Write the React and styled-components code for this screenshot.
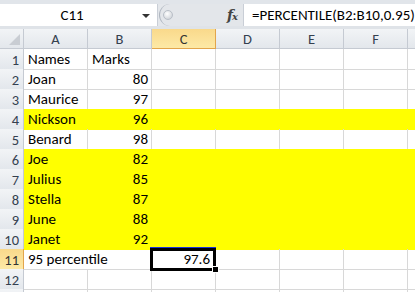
import React from 'react';
import styled, {createGlobalStyle, css} from "styled-components";

const GlobalStyle = createGlobalStyle`
html, body {
margin: 0;
padding: 0;
background: #ffffff;
overflow: hidden;
}
body {
font-family: Carlito, Lato, "Liberation Sans", sans-serif;
}
`;

const Sheet = styled.div`
width: 415px;
height: 292px;
overflow: hidden;
background: #ffffff;
`;

const FormulaBar = styled.div`
display: flex;
height: 22px;
border-top: 4px solid #e1e5ea;
border-bottom: 3px solid #dfe3e8;
background: #e4e7eb;
`;

const NameBox = styled.div`
display: flex;
align-items: center;
width: 158px;
background: #ffffff;
border-right: 1px solid #c9ced6;
box-sizing: border-box;
`;

const NameText = styled.div`
flex: 1;
text-align: center;
font-size: 15px;
color: #000;
padding-left: 2px;
`;

const DropArrow = styled.div`
width: 0;
height: 0;
margin: 2px 7px 0 0;
border-left: 4px solid transparent;
border-right: 4px solid transparent;
border-top: 4px solid #333;
`;

const Grip = styled.div`
display: flex;
align-items: center;
justify-content: space-between;
width: 84px;
margin-left: 1px;
padding: 0 6px 0 3px;
box-sizing: border-box;
background: #e3e6ea;
border-left: 1px solid #aeb5bf;
border-radius: 11px 0 0 11px;
`;

const Bubble = styled.div`
width: 8px;
height: 8px;
border-radius: 50%;
background: radial-gradient(circle at 40% 35%, #ffffff, #c4c9d0);
border: 1px solid #b9bfc7;
`;

const Fx = styled.div`
font-family: "DejaVu Serif", "Liberation Serif", serif;
font-style: italic;
font-weight: bold;
font-size: 14px;
color: #444;
letter-spacing: -1px;

span {
font-size: 10px;
}
`;

const FormulaInput = styled.div`
flex: 1;
display: flex;
align-items: center;
padding-left: 8px;
background: #ffffff;
border-left: 1px solid #c9ced6;
font-size: 15px;
color: #000;
white-space: nowrap;
overflow: hidden;
`;

const Grid = styled.div`
display: flex;
flex-direction: column;
`;

const Row = styled.div`
display: grid;
grid-template-columns: 24px repeat(7, 64px);
height: 20px;
`;

const headerBase = css`
box-sizing: border-box;
display: flex;
align-items: center;
justify-content: center;
font-size: 14.5px;
color: #34404f;
background: linear-gradient(#f2f4f6, #e3e7ec);
border-right: 1px solid #c5cad2;
border-bottom: 1px solid #c5cad2;

${({$active}) => (
    $active && css`
background: linear-gradient(#f9d98b, #fde9a6);
border-right-color: #e2a54c;
border-bottom-color: #e2a54c;
color: #333;
`)}
`;

const ColHeader = styled.div`
${headerBase}
`;

const RowHeader = styled.div`
${headerBase}
justify-content: flex-end;
padding-right: 4px;
padding-top: 2px;
`;

const Corner = styled.div`
box-sizing: border-box;
position: relative;
background: linear-gradient(#f2f4f6, #e3e7ec);
border-right: 1px solid #c5cad2;
border-bottom: 1px solid #c5cad2;

&::after {
content: "";
position: absolute;
right: 3px;
bottom: 3px;
border-left: 11px solid transparent;
border-bottom: 11px solid #c9cdd3;
}
`;

const Cell = styled.div`
box-sizing: border-box;
display: flex;
align-items: flex-end;
padding: 0 3px 1px 4px;
font-size: 15px;
color: #000;
white-space: nowrap;
overflow: visible;
border-right: 1px solid #d8d8d8;
border-bottom: 1px solid #d8d8d8;
justify-content: ${({$right}) => $right ? 'flex-end' : 'flex-start'};

${({$fill}) => (
    $fill && css`
background: #ffff00;
border-right-color: #ffff00;
border-bottom-color: #ffff00;
`)}

${({$span}) => (
    $span && css`
border-right-color: transparent;
`)}

${({$selected}) => (
    $selected && css`
position: relative;
padding-right: 5px;

&::before {
content: "";
position: absolute;
left: -2px;
top: -1px;
right: -1px;
bottom: -2px;
border: 3px solid #000;
border-top: 3px solid #000;
box-shadow: 0 -1px 0 #1a32d8;
pointer-events: none;
}

&::after {
content: "";
position: absolute;
right: -4px;
bottom: -4px;
width: 5px;
height: 5px;
background: #000;
border: 1px solid #fff;
}
`)}
`;

const columns = ['A', 'B', 'C', 'D', 'E', 'F', ''];

const data = [
    {name: 'Names', mark: 'Marks', head: true},
    {name: 'Joan', mark: 80},
    {name: 'Maurice', mark: 97},
    {name: 'Nickson', mark: 96, fill: true},
    {name: 'Benard', mark: 98},
    {name: 'Joe', mark: 82, fill: true},
    {name: 'Julius', mark: 85, fill: true},
    {name: 'Stella', mark: 87, fill: true},
    {name: 'June', mark: 88, fill: true},
    {name: 'Janet', mark: 92, fill: true},
    {name: '95 percentile', result: '97.6'},
    {},
    {blank: true},
];

export default function App() {
    return (
        <>
            <GlobalStyle/>
            <Sheet>
                <FormulaBar>
                    <NameBox>
                        <NameText>C11</NameText>
                        <DropArrow/>
                    </NameBox>
                    <Grip>
                        <Bubble/>
                        <Fx>f<span>x</span></Fx>
                    </Grip>
                    <FormulaInput>=PERCENTILE(B2:B10,0.95)</FormulaInput>
                </FormulaBar>
                <Grid>
                    <Row>
                        <Corner/>
                        {columns.map((c, i) => <ColHeader key={i} $active={c === 'C'}>{c}</ColHeader>)}
                    </Row>
                    {data.map((r, i) => (
                        <Row key={i}>
                            <RowHeader $active={i === 10}>{r.blank ? '' : i + 1}</RowHeader>
                            <Cell $fill={r.fill} $span={!!r.result}>{r.name}</Cell>
                            <Cell $fill={r.fill} $right={!r.head}>{r.mark}</Cell>
                            <Cell $fill={r.fill} $right $selected={!!r.result}>{r.result}</Cell>
                            <Cell $fill={r.fill}/>
                            <Cell $fill={r.fill}/>
                            <Cell $fill={r.fill}/>
                            <Cell $fill={r.fill}/>
                        </Row>
                    ))}
                </Grid>
            </Sheet>
        </>
    );
}
